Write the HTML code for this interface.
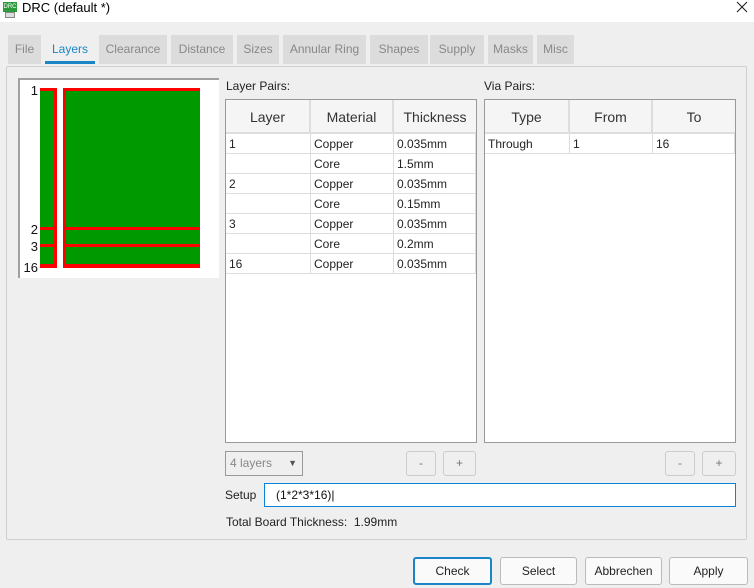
<!DOCTYPE html>
<html><head><style>
*{box-sizing:border-box;margin:0;padding:0}
body{width:754px;height:588px;background:#efefef;font-family:"Liberation Sans",sans-serif;font-size:12px;color:#222;position:relative;overflow:hidden}
.a{position:absolute}
.title{left:0;top:0;width:754px;height:22px;background:#fff}
.tab{position:absolute;top:35px;height:29px;background:#dcdcdc;color:#888;font-size:12px;line-height:29px;text-align:center}
.tab.act{background:#efefef;color:#1a86c8;border-bottom:3px solid #1a86c8;line-height:29px}
.panel{left:6px;top:66px;width:741px;height:474px;border:1px solid #cfcfcf;border-radius:2px}
.tbl{position:absolute;background:#fff;border:1px solid #999}
.cell{position:absolute;border-right:1px solid #ddd;border-bottom:1px solid #ddd;height:20px;line-height:20px;padding-left:3px}
.hd{position:absolute;background:#f5f5f5;border-right:2px solid #ddd;border-bottom:2px solid #ddd;height:34px;line-height:34px;text-align:center;font-size:14px;color:#333}
.btn{position:absolute;border:1px solid #bbb;border-radius:3px;background:#fafafa;text-align:center;line-height:27px}
.sb{position:absolute;border:1px solid #ccc;border-radius:3px;background:#efefef;color:#777;text-align:center;line-height:23px}
</style></head><body>
<div class="a title"></div>
<div class="a" style="left:3px;top:2px;width:14px;height:10px;background:#2a9a3a;color:#fff;font-size:6px;line-height:10px;text-align:center">DRC</div>
<div class="a" style="left:5px;top:12px;width:10px;height:6px;background:#ddd;border:1px solid #888"></div>
<div class="a" style="left:22px;top:0;font-size:13px;line-height:16px;color:#000">DRC (default *)</div>
<svg class="a" style="left:736px;top:1px" width="12" height="12"><path d="M1 1L11 11M11 1L1 11" stroke="#222" stroke-width="1.1"/></svg>

<div class="tab" style="left:8px;width:33px">File</div>
<div class="tab act" style="left:45px;width:50px">Layers</div>
<div class="tab" style="left:99px;width:68px">Clearance</div>
<div class="tab" style="left:171px;width:62px">Distance</div>
<div class="tab" style="left:237px;width:42px">Sizes</div>
<div class="tab" style="left:283px;width:83px">Annular Ring</div>
<div class="tab" style="left:370px;width:58px">Shapes</div>
<div class="tab" style="left:430px;width:54px">Supply</div>
<div class="tab" style="left:488px;width:45px">Masks</div>
<div class="tab" style="left:537px;width:37px">Misc</div>

<div class="a panel"></div>

<div class="a" style="left:18px;top:78px;width:201px;height:200px;background:#fff;border-top:2px solid #a0a0a0;border-left:2px solid #a0a0a0"></div>
<svg class="a" style="left:0;top:0" width="230" height="290">
<rect x="40" y="88" width="17" height="180" fill="#ff0000"/>
<rect x="40" y="91" width="14" height="173" fill="#009900"/>
<rect x="63" y="88" width="137" height="180" fill="#ff0000"/>
<rect x="66" y="91" width="134" height="173" fill="#009900"/>
<rect x="40" y="227" width="17" height="3" fill="#ff0000"/>
<rect x="40" y="244" width="17" height="3" fill="#ff0000"/>
<rect x="63" y="227" width="137" height="3" fill="#ff0000"/>
<rect x="63" y="244" width="137" height="3" fill="#ff0000"/>
<g font-family="Liberation Sans" font-size="13" fill="#111" text-anchor="end">
<text x="38" y="95">1</text><text x="38" y="234">2</text><text x="38" y="251">3</text><text x="38" y="272">16</text></g>
</svg>

<div class="a" style="left:226px;top:79px">Layer Pairs:</div>
<div class="a" style="left:484px;top:79px">Via Pairs:</div>

<div class="tbl" style="left:225px;top:99px;width:252px;height:344px">
<div class="hd" style="left:0;top:0;width:85px">Layer</div>
<div class="hd" style="left:85px;top:0;width:83px">Material</div>
<div class="hd" style="left:168px;top:0;width:82px;border-right:none">Thickness</div>
</div>
<div class="tbl" style="left:484px;top:99px;width:252px;height:344px">
<div class="hd" style="left:0;top:0;width:85px">Type</div>
<div class="hd" style="left:85px;top:0;width:83px">From</div>
<div class="hd" style="left:168px;top:0;width:82px;border-right:none">To</div>
<div class="cell" style="left:0;top:34px;width:85px">Through</div>
<div class="cell" style="left:85px;top:34px;width:83px">1</div>
<div class="cell" style="left:168px;top:34px;width:82px">16</div>
</div>
<div class="a" style="left:226px;top:134px">
<div class="cell" style="left:0;top:0;width:85px">1</div><div class="cell" style="left:85px;top:0;width:83px">Copper</div><div class="cell" style="left:168px;top:0;width:82px">0.035mm</div>
<div class="cell" style="left:0;top:20px;width:85px"></div><div class="cell" style="left:85px;top:20px;width:83px">Core</div><div class="cell" style="left:168px;top:20px;width:82px">1.5mm</div>
<div class="cell" style="left:0;top:40px;width:85px">2</div><div class="cell" style="left:85px;top:40px;width:83px">Copper</div><div class="cell" style="left:168px;top:40px;width:82px">0.035mm</div>
<div class="cell" style="left:0;top:60px;width:85px"></div><div class="cell" style="left:85px;top:60px;width:83px">Core</div><div class="cell" style="left:168px;top:60px;width:82px">0.15mm</div>
<div class="cell" style="left:0;top:80px;width:85px">3</div><div class="cell" style="left:85px;top:80px;width:83px">Copper</div><div class="cell" style="left:168px;top:80px;width:82px">0.035mm</div>
<div class="cell" style="left:0;top:100px;width:85px"></div><div class="cell" style="left:85px;top:100px;width:83px">Core</div><div class="cell" style="left:168px;top:100px;width:82px">0.2mm</div>
<div class="cell" style="left:0;top:120px;width:85px">16</div><div class="cell" style="left:85px;top:120px;width:83px">Copper</div><div class="cell" style="left:168px;top:120px;width:82px">0.035mm</div>
</div>

<div class="a" style="left:225px;top:451px;width:78px;height:25px;border:1px solid #999;color:#888;line-height:23px;padding-left:4px">4 layers<span style="position:absolute;right:5px;font-size:9px;color:#555">▼</span></div>
<div class="sb" style="left:406px;top:451px;width:30px;height:25px">-</div>
<div class="sb" style="left:443px;top:451px;width:33px;height:25px">+</div>
<div class="sb" style="left:665px;top:451px;width:30px;height:25px">-</div>
<div class="sb" style="left:702px;top:451px;width:34px;height:25px">+</div>

<div class="a" style="left:225px;top:488px">Setup</div>
<div class="a" style="left:264px;top:483px;width:472px;height:24px;background:#fff;border:1px solid #0a84d6;line-height:22px;padding-left:11px;color:#111">(1*2*3*16)|</div>
<div class="a" style="left:226px;top:515px">Total Board Thickness:&nbsp; 1.99mm</div>

<div class="btn" style="left:413px;top:557px;width:79px;height:28px;border:2px solid #1a86c8;line-height:25px">Check</div>
<div class="btn" style="left:500px;top:557px;width:77px;height:28px">Select</div>
<div class="btn" style="left:585px;top:557px;width:77px;height:28px">Abbrechen</div>
<div class="btn" style="left:669px;top:557px;width:79px;height:28px">Apply</div>
</body></html>
